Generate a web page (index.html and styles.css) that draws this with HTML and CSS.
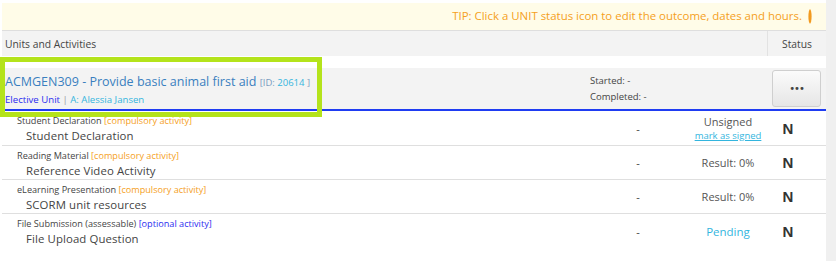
FILE: index.html
```html
<!DOCTYPE html>
<html>
<head>
<meta charset="utf-8">
<link rel="stylesheet" href="styles.css">
</head>
<body>
<div class="page">
  <main class="main">
    <div class="tip">
      <span>TIP: Click a UNIT status icon to edit the outcome, dates and hours.</span>
      <svg class="tip-icon" width="4" height="15" viewBox="0 0 4 15"><ellipse cx="2" cy="7.5" rx="1.6" ry="7.2" fill="#f29a1f"/></svg>
    </div>
    <div class="thead">
      <div class="th th-main">Units and Activities</div>
      <div class="th th-status">Status</div>
    </div>
    <div class="unit">
      <div class="unit-info">
        <div class="unit-title">ACMGEN309 - Provide basic animal first aid <span class="unit-id">[ID: <span class="cyan">20614</span> ]</span></div>
        <div class="unit-sub"><span class="elective">Elective Unit</span> <span class="pipe">|</span> <span class="cyan">A: Alessia Jansen</span></div>
      </div>
      <div class="unit-dates">
        <div>Started: -</div>
        <div>Completed: -</div>
      </div>
      <button class="more">&bull;&bull;&bull;</button>
    </div>
    <div class="row first">
      <div class="act">
        <div class="act-type">Student Declaration <span class="tag-c">[compulsory activity]</span></div>
        <div class="act-title">Student Declaration</div>
      </div>
      <div class="dash">-</div>
      <div class="status">
        <div>Unsigned</div>
        <a class="sign">mark as signed</a>
      </div>
      <div class="n">N</div>
    </div>
    <div class="row">
      <div class="act">
        <div class="act-type">Reading Material <span class="tag-c">[compulsory activity]</span></div>
        <div class="act-title">Reference Video Activity</div>
      </div>
      <div class="dash">-</div>
      <div class="status">Result: 0%</div>
      <div class="n">N</div>
    </div>
    <div class="row">
      <div class="act">
        <div class="act-type">eLearning Presentation <span class="tag-c">[compulsory activity]</span></div>
        <div class="act-title">SCORM unit resources</div>
      </div>
      <div class="dash">-</div>
      <div class="status">Result: 0%</div>
      <div class="n">N</div>
    </div>
    <div class="row last">
      <div class="act">
        <div class="act-type">File Submission (assessable) <span class="tag-o">[optional activity]</span></div>
        <div class="act-title">File Upload Question</div>
      </div>
      <div class="dash">-</div>
      <div class="status pending">Pending</div>
      <div class="n">N</div>
    </div>
    <div class="highlight"></div>
  </main>
  <div class="strip"></div>
</div>
</body>
</html>
```
FILE: styles.css
```css
* { box-sizing: border-box; }
html, body { margin: 0; padding: 0; background: #fff; }
body { font-family: "Open Sans", "Noto Sans", sans-serif; color: #444; }
.page { display: flex; height: 261px; overflow: hidden; }
.main { position: relative; width: 826px; padding: 3px 0 0 2px; }
.strip { flex: 1; background: #f0f0f0; }

.tip {
  height: 27px; background: #fffce8; color: #f5a01c;
  display: flex; justify-content: flex-end; align-items: center;
  padding: 0 14px 3px 0; font-size: 11.45px; gap: 6px;
}
.tip-icon { display: block; margin-top: 3px; }

.thead {
  display: flex; height: 26px; background: #f3f3f3;
  border-top: 1px solid #dedede; font-size: 10.3px; color: #444;
}
.th { display: flex; align-items: center; }
.th-main { flex: 1; padding-left: 3px; }
.th-status { width: 59px; justify-content: center; border-left: 1px solid #e2e2e2; }

.unit {
  margin-top: 12px; height: 43px; background: #f3f3f3;
  border-bottom: 2px solid #1f3cf2;
  display: flex; align-items: flex-start; padding: 0 5px 0 3px;
}
.unit-info { flex: 1; padding-top: 5px; }
.unit-title { font-size: 12.5px; line-height: 18px; color: #3a7fbf; }
.unit-id { font-size: 9.5px; color: #7a9cc0; }
.cyan { color: #33b5de; }
.unit-sub { font-size: 9.6px; line-height: 15px; }
.elective { color: #2c2cf0; }
.pipe { color: #999; }
.unit-dates { width: 182px; padding-top: 5px; font-size: 9.5px; line-height: 16px; color: #444; }
.more {
  margin-top: 2px; width: 49px; height: 37px;
  border: 1px solid #cfcfcf; border-radius: 3px;
  background: linear-gradient(#fbfbfb, #e6e6e6);
  font-size: 10px; color: #444; letter-spacing: -1px; padding: 0 0 1px 0;
  font-family: "DejaVu Sans", sans-serif;
}

.row {
  display: grid; grid-template-columns: 1fr 80px 80px 20px; column-gap: 10px;
  align-items: center; height: 34px;
  border-bottom: 1px solid #dfdfdf; padding-right: 28px;
}
.row.first { height: 35px; }
.row.last { border-bottom: none; }
.act { padding: 0 0 0 15px; align-self: start; }
.act-type { font-size: 9.15px; line-height: 12px; padding-top: 4px; color: #444; }
.tag-c { color: #f5a01c; }
.tag-o { color: #2c2cf0; }
.act-title { font-size: 11.4px; line-height: 17px; padding-left: 9px; color: #444; letter-spacing: 0.1px; }
.dash { text-align: center; font-size: 11px; }
.status { text-align: center; font-size: 11px; color: #555; line-height: 15px; }
.sign { display: block; font-size: 9.5px; line-height: 14px; color: #33b5de; text-decoration: underline; }
.pending { color: #33b5de; font-size: 11.5px; }
.n { text-align: center; font-family: "Liberation Sans", Arial, sans-serif; font-weight: bold; font-size: 15px; color: #333; }

.highlight {
  position: absolute; left: 0; top: 57px; width: 322px; height: 60px;
  border: 5px solid #b4e31b; pointer-events: none;
}
```
